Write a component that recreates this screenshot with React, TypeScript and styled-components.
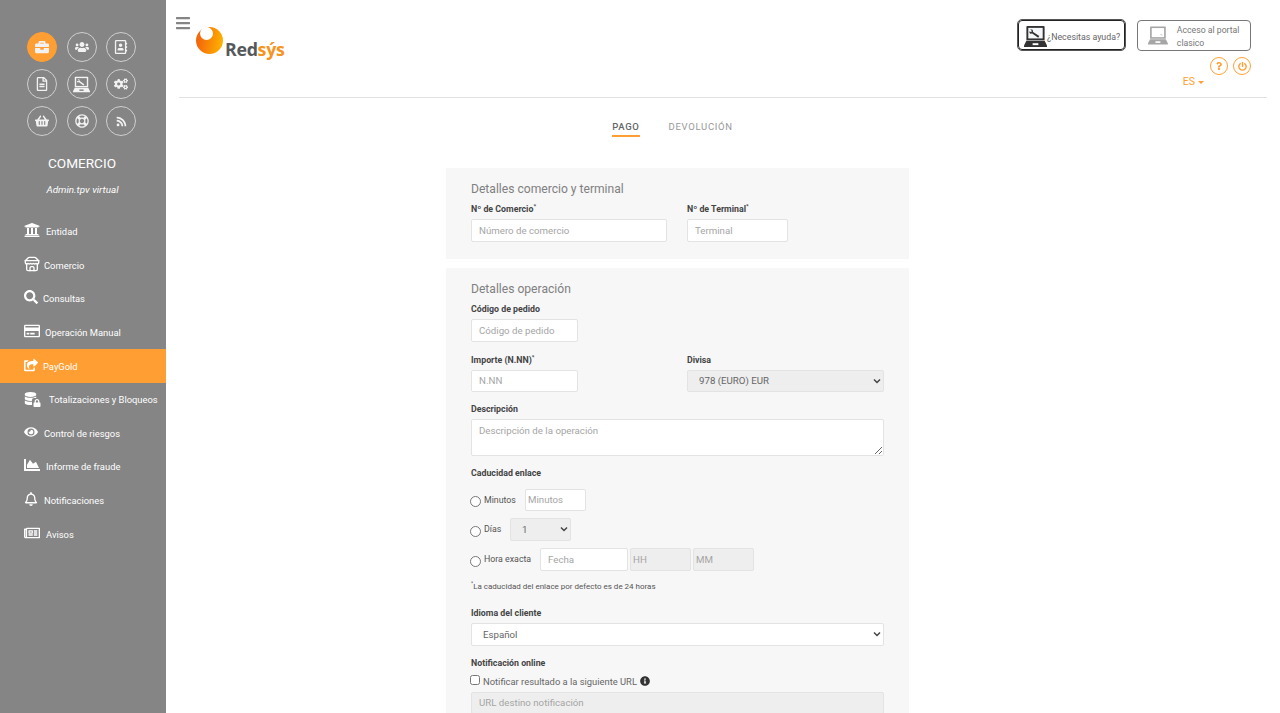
import React from 'react';
import styled, {createGlobalStyle} from 'styled-components';
import {
    FaBriefcase, FaCogs, FaDatabase, FaEye, FaInfoCircle, FaLock, FaPowerOff, FaQuestion, FaRegAddressBook,
    FaRegBell, FaRegFileAlt, FaRegLifeRing, FaRegNewspaper, FaRss, FaSearch, FaShareSquare, FaShoppingBasket,
    FaUniversity, FaUsers, FaChartArea, FaRegCreditCard, FaBars,
} from 'react-icons/fa';
import {LuStore} from 'react-icons/lu';

const orange = '#ff9f33';
const chevron = "url(\"data:image/svg+xml,%3Csvg xmlns='http://www.w3.org/2000/svg' width='8' height='6' viewBox='0 0 8 6'%3E%3Cpath d='M1 1.500l3 3 3-3' fill='none' stroke='%23444' stroke-width='1.500'/%3E%3C/svg%3E\")";

const Global = createGlobalStyle`
  html, body { margin: 0; height: 100%; background: #fff; overflow: hidden; }
  * { box-sizing: border-box; }
  body { font-family: Roboto, "Liberation Sans", sans-serif; }
`

type LaptopProps = {size: number; color: string; screen: string; wrench?: boolean};

const LaptopIcon = ({size, color, screen, wrench}: LaptopProps) => (
    <svg width={size} height={size} viewBox="0 0 24 24" fill="none">
        <path d="M3.500 1h17a1 1 0 0 1 1 1v14h-19V2a1 1 0 0 1 1-1z" fill={color}/>
        <rect x="4.500" y="3" width="15" height="11" fill={screen}/>
        <path d="M2.500 16.500h19L24 21.500V23H0v-1.500z" fill={color}/>
        <rect x="9" y="19" width="6" height="2" fill={screen === '#858585' ? screen : '#fff'}/>
        {wrench
            ? <path d="M6.500 4.500l2.500 0.500 0.500 2.200 6.500 4.300-1.200 1.800-6.300-4.500-2.200 0.200-1-2.200 2.200 0.600 0.700-1.200z" fill={color}/>
            : <path d="M15.500 10.500l1.500 1.500" stroke={color} strokeWidth="1.200"/>}
    </svg>
);

const menuIcons = [
    {icon: <FaBriefcase/>, active: true},
    {icon: <FaUsers/>},
    {icon: <FaRegAddressBook/>},
    {icon: <FaRegFileAlt/>},
    {icon: <LaptopIcon size={17} color="#f4f4f4" screen="#858585" wrench/>},
    {icon: <FaCogs/>},
    {icon: <FaShoppingBasket/>},
    {icon: <FaRegLifeRing/>},
    {icon: <FaRss size={11}/>},
];

const menu = [
    {label: 'Entidad', width: 22, icon: <FaUniversity size={16}/>},
    {label: 'Comercio', width: 20, icon: <LuStore size={16} strokeWidth={2}/>},
    {label: 'Consultas', width: 19, icon: <FaSearch size={14}/>},
    {label: 'Operación Manual', width: 21, icon: <FaRegCreditCard size={16}/>},
    {label: 'PayGold', width: 19, icon: <FaShareSquare size={14}/>, active: true},
    {label: 'Totalizaciones y Bloqueos', width: 25, icon: <TotalIcon/>},
    {label: 'Control de riesgos', width: 20, icon: <FaEye size={14}/>},
    {label: 'Informe de fraude', width: 22, icon: <FaChartArea size={16}/>},
    {label: 'Notificaciones', width: 20, icon: <FaRegBell size={14}/>},
    {label: 'Avisos', width: 22, icon: <FaRegNewspaper size={16}/>},
];

function TotalIcon() {
    return (
        <TotalWrap>
            <FaDatabase size={13}/>
            <TotalLock><FaLock size={8}/></TotalLock>
        </TotalWrap>
    );
}

export default function App() {
    return (
        <Page>
            <Global/>
            <Sidebar>
                <CircleGrid>
                    {menuIcons.map((item, index) => (
                        <Circle key={index} $active={item.active}>{item.icon}</Circle>
                    ))}
                </CircleGrid>
                <Role>COMERCIO</Role>
                <UserName>Admin.tpv virtual</UserName>
                <Menu>
                    {menu.map((item) => (
                        <MenuRow key={item.label} $active={item.active}>
                            <MenuIcon $width={item.width}>{item.icon}</MenuIcon>
                            {item.label}
                        </MenuRow>
                    ))}
                </Menu>
            </Sidebar>
            <Main>
                <Header>
                    <Burger><FaBars size={16}/></Burger>
                    <Logo>
                        <LogoBall/>
                        <LogoText>Red<span>sýs</span></LogoText>
                    </Logo>
                    <HeaderRight>
                        <HeaderButtons>
                            <HelpButton>
                                <LaptopIcon size={23} color="#333" screen="#f4f7fa" wrench/>
                                <span>¿Necesitas ayuda?</span>
                            </HelpButton>
                            <PortalButton>
                                <LaptopIcon size={25} color="#a6a6a6" screen="#fff"/>
                                <PortalText>Acceso al portal clasico</PortalText>
                            </PortalButton>
                        </HeaderButtons>
                        <RoundRow>
                            <RoundIcon><FaQuestion size={8}/></RoundIcon>
                            <RoundIcon><FaPowerOff size={9}/></RoundIcon>
                        </RoundRow>
                        <Lang>ES <Caret/></Lang>
                    </HeaderRight>
                </Header>
                <FormColumn>
                    <Tabs>
                        <Tab $active>PAGO</Tab>
                        <Tab>DEVOLUCIÓN</Tab>
                    </Tabs>
                    <Panel $first>
                        <PanelTitle>Detalles comercio y terminal</PanelTitle>
                        <Row>
                            <Field $width={216}>
                                <Label>Nº de Comercio<sup>*</sup></Label>
                                <TextInput $width={196} placeholder="Número de comercio"/>
                            </Field>
                            <Field>
                                <Label>Nº de Terminal<sup>*</sup></Label>
                                <TextInput $width={101} placeholder="Terminal"/>
                            </Field>
                        </Row>
                    </Panel>
                    <Panel>
                        <PanelTitle>Detalles operación</PanelTitle>
                        <Field $top={1}>
                            <Label>Código de pedido</Label>
                            <TextInput $width={107} placeholder="Código de pedido"/>
                        </Field>
                        <Row $top={12}>
                            <Field $width={216}>
                                <Label>Importe (N.NN)<sup>*</sup></Label>
                                <TextInput $width={107} placeholder="N.NN"/>
                            </Field>
                            <Field>
                                <Label>Divisa</Label>
                                <Select $width={197} $disabled defaultValue="978">
                                    <option value="978">978 (EURO) EUR</option>
                                </Select>
                            </Field>
                        </Row>
                        <Field $top={11}>
                            <Label>Descripción</Label>
                            <TextArea placeholder="Descripción de la operación"/>
                        </Field>
                        <Label $top={11}>Caducidad enlace</Label>
                        <RadioRow $top={9}>
                            <Radio type="radio"/>
                            <RadioLabel $width={41}>Minutos</RadioLabel>
                            <SmallInput $width={61} placeholder="Minutos"/>
                        </RadioRow>
                        <RadioRow $top={7}>
                            <Radio type="radio"/>
                            <RadioLabel $width={26}>Días</RadioLabel>
                            <Select $width={61} $disabled defaultValue="1">
                                <option value="1">1</option>
                            </Select>
                        </RadioRow>
                        <RadioRow $top={7.5}>
                            <Radio type="radio"/>
                            <RadioLabel $width={56}>Hora exacta</RadioLabel>
                            <TextInput $width={88} placeholder="Fecha"/>
                            <TimeInput disabled placeholder="HH"/>
                            <TimeInput disabled placeholder="MM"/>
                        </RadioRow>
                        <Hint><sup>*</sup>La caducidad del enlace por defecto es de 24 horas</Hint>
                        <Field $top={14.5}>
                            <Label>Idioma del cliente</Label>
                            <Select $width={413} defaultValue="es">
                                <option value="es">Español</option>
                            </Select>
                        </Field>
                        <Label $top={11}>Notificación online</Label>
                        <CheckRow>
                            <Check type="checkbox"/>
                            Notificar resultado a la siguiente URL
                            <FaInfoCircle size={10} color="#333"/>
                        </CheckRow>
                        <TextInput $width={413} disabled placeholder="URL destino notificación"/>
                    </Panel>
                </FormColumn>
            </Main>
        </Page>
    );
}

const Page = styled.div`
  display: flex;
  height: 713px;
  overflow: hidden;
`

const Sidebar = styled.aside`
  width: 166px;
  flex-shrink: 0;
  background: #858585;
  color: #fff;
  padding-top: 32px;
`

const CircleGrid = styled.div`
  display: grid;
  grid-template-columns: repeat(3, 30px);
  grid-auto-rows: 30px;
  column-gap: 9.5px;
  row-gap: 7px;
  padding-left: 27px;
`

const Circle = styled.div<{$active?: boolean}>`
  display: flex;
  align-items: center;
  justify-content: center;
  border-radius: 50%;
  font-size: 14px;
  border: 1px solid ${({$active}) => ($active ? orange : '#cfcfcf')};
  background: ${({$active}) => ($active ? orange : 'transparent')};
  color: #f2f2f2;
`

const Role = styled.div`
  margin-top: 18px;
  padding-right: 2px;
  text-align: center;
  font-size: 13.6px;
  line-height: 18px;
`

const UserName = styled.div`
  margin-top: 11px;
  padding-right: 1px;
  text-align: center;
  font-size: 9.9px;
  line-height: 14px;
  font-style: italic;
`

const Menu = styled.nav`
  margin-top: 18px;
`

const MenuRow = styled.div<{$active?: boolean}>`
  display: flex;
  align-items: center;
  height: 33.6px;
  padding-left: 24px;
  font-size: 9.4px;
  white-space: nowrap;
  background: ${({$active}) => ($active ? orange : 'transparent')};
`

const MenuIcon = styled.span<{$width: number}>`
  display: flex;
  align-items: center;
  width: ${({$width}) => $width}px;
  margin-top: -3px;
`

const TotalWrap = styled.span`
  position: relative;
  display: inline-flex;
`

const TotalLock = styled.span`
  position: absolute;
  left: 8px;
  top: 6px;
  display: flex;
  padding: 1px;
  border-radius: 2px;
  background: #858585;
`

const Main = styled.main`
  flex: 1;
  min-width: 0;
  padding: 0 13px;
`

const Header = styled.header`
  display: flex;
  height: 98px;
  border-bottom: 1px solid #e2e2e2;
`

const Burger = styled.div`
  margin: 15px 0 0 -4px;
  width: 21px;
  height: 20px;
  color: #858585;
`

const Logo = styled.div`
  display: flex;
  align-items: flex-start;
  margin: 27px 0 0 0;
`

const LogoBall = styled.div`
  position: relative;
  width: 27px;
  height: 27px;
  border-radius: 50%;
  background: linear-gradient(100deg, #f4680b 15%, #ffb400 95%);

  &::after {
    content: '';
    position: absolute;
    left: 4px;
    top: 0;
    width: 13px;
    height: 13px;
    border-radius: 50%;
    background: #fff;
  }
`

const LogoText = styled.div`
  margin: 10px 0 0 2px;
  font: 700 17.8px/24px "Open Sans", sans-serif;
  letter-spacing: -0.3px;
  color: #55595c;

  span {
    color: #f7941d;
  }
`

const HeaderRight = styled.div`
  margin-left: auto;
  display: flex;
  flex-direction: column;
  align-items: flex-end;
  padding: 20px 16px 0 0;
`

const HeaderButtons = styled.div`
  display: flex;
  gap: 12px;
`

const HelpButton = styled.div`
  display: flex;
  align-items: center;
  width: 107px;
  height: 30px;
  padding: 3px 0 0 5px;
  border: 1px solid #222;
  border-radius: 4px;
  outline: 0.5px solid #555;
  font-size: 8.8px;
  color: #666;
  white-space: nowrap;
`

const PortalButton = styled.div`
  display: flex;
  align-items: center;
  gap: 9px;
  width: 114px;
  height: 31px;
  padding-left: 10px;
  border: 1px solid #777;
  border-radius: 4px;
  font-size: 8.7px;
  line-height: 13px;
  color: #777;
`

const PortalText = styled.span`
  margin-top: 2px;
`

const RoundRow = styled.div`
  display: flex;
  gap: 5px;
  margin-top: 6px;
`

const RoundIcon = styled.div`
  display: flex;
  align-items: center;
  justify-content: center;
  width: 18px;
  height: 18px;
  border: 1px solid ${orange};
  border-radius: 50%;
  color: ${orange};
`

const Lang = styled.div`
  display: flex;
  align-items: center;
  gap: 3px;
  margin-right: 47px;
  font-size: 10.5px;
  line-height: 14px;
  color: ${orange};
`

const Caret = styled.span`
  width: 0;
  height: 0;
  border: 3px solid transparent;
  border-top-color: ${orange};
  border-bottom: 0;
`

const FormColumn = styled.div`
  width: 463px;
  margin-left: 267px;
`

const Tabs = styled.div`
  display: flex;
  justify-content: center;
  gap: 29px;
  padding: 22px 10px 0 0;
  margin-bottom: 31px;
`

const Tab = styled.div<{$active?: boolean}>`
  height: 17px;
  font-size: 9.5px;
  line-height: 14px;
  font-weight: ${({$active}) => ($active ? 500 : 400)};
  letter-spacing: 0.7px;
  color: ${({$active}) => ($active ? '#666' : '#999')};
  border-bottom: ${({$active}) => ($active ? `2px solid ${orange}` : 'none')};
`

const Panel = styled.section<{$first?: boolean}>`
  background: #f7f7f7;
  padding: 13px 25px ${({$first}) => ($first ? '0' : '40px')};
  margin-bottom: 9px;
  height: ${({$first}) => ($first ? '91px' : 'auto')};
`

const PanelTitle = styled.h2`
  margin: 0 0 6px;
  font-size: 12.1px;
  line-height: 16px;
  font-weight: 400;
  color: #808080;
`

const Row = styled.div<{$top?: number}>`
  display: flex;
  margin-top: ${({$top}) => $top ?? 0}px;
`

const Field = styled.div<{$width?: number; $top?: number}>`
  width: ${({$width}) => ($width ? `${$width}px` : 'auto')};
  margin-top: ${({$top}) => $top ?? 0}px;
`

const Label = styled.div<{$top?: number}>`
  margin: ${({$top}) => $top ?? 0}px 0 3px;
  font-size: 8.8px;
  line-height: 13px;
  font-weight: 700;
  color: #444;

  sup {
    font-size: 6px;
    line-height: 0;
  }
`

const inputBase = `
  display: block;
  height: 22.5px;
  border: 1px solid #e3e3e3;
  border-radius: 2px;
  background: #fff;
  font-family: Roboto, sans-serif;
  font-size: 9.7px;
  color: #666;
  outline: none;

  &::placeholder {
    color: #a5a5a5;
    opacity: 1;
  }
`

const TextInput = styled.input<{$width: number}>`
  ${inputBase}
  width: ${({$width}) => $width}px;
  padding: 0 7px;

  &:disabled {
    background: #eeeeee;
  }
`

const SmallInput = styled(TextInput)`
  padding: 0 2px;
`

const TimeInput = styled.input`
  ${inputBase}
  width: 61px;
  padding: 0 2px;
  margin-left: 2px;
  background: #eeeeee;
`

const Select = styled.select<{$width: number; $disabled?: boolean}>`
  ${inputBase}
  appearance: none;
  width: ${({$width}) => $width}px;
  padding: 0 11px;
  background: ${({$disabled}) => ($disabled ? '#eeeeee' : '#fff')} ${chevron} no-repeat right 2px center;
`

const TextArea = styled.textarea`
  ${inputBase}
  width: 413px;
  height: 36.5px;
  padding: 5px 7px;
`

const RadioRow = styled.div<{$top?: number}>`
  display: flex;
  align-items: center;
  margin-top: ${({$top}) => $top ?? 0}px;
`

const Radio = styled.input`
  width: 11px;
  height: 11px;
  margin: 4px 3px 0 -1px;
`

const RadioLabel = styled.span<{$width: number}>`
  width: ${({$width}) => $width}px;
  flex-shrink: 0;
  font-size: 8.8px;
  color: #555;
`

const Hint = styled.div`
  margin-top: 10px;
  font-size: 8px;
  line-height: 12px;
  color: #555;

  sup {
    font-size: 5px;
    line-height: 0;
  }
`

const CheckRow = styled.label`
  display: flex;
  align-items: center;
  gap: 3px;
  margin: 4px 0 3px;
  height: 15px;
  font-size: 9.4px;
  color: #666;
`

const Check = styled.input`
  width: 10px;
  height: 10px;
  margin: 0 0 2px -1px;
`
